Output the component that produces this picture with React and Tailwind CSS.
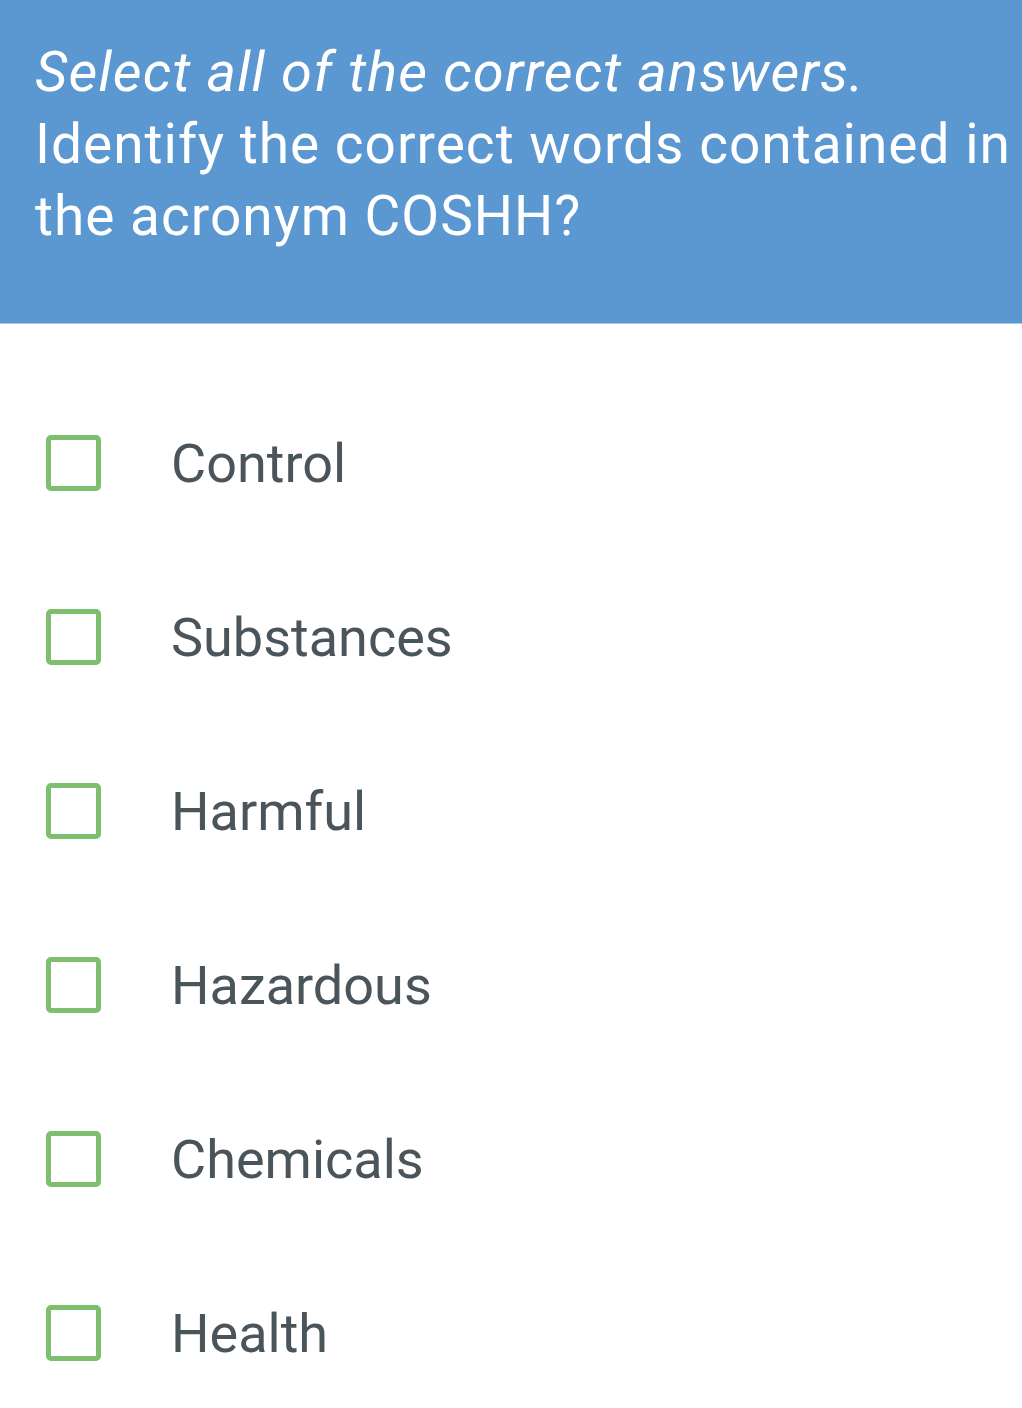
export default function App() {
  const options = ["Control", "Substances", "Harmful", "Hazardous", "Chemicals", "Health"];
  return (
    <div className="w-[1022px] h-[1408px] bg-white overflow-hidden" style={{ fontFamily: "Roboto, 'Noto Sans', sans-serif" }}>
      <div className="h-[324px] bg-[#5b97d0] border-b border-[#a9c9ea] pl-[35px] pt-[36px] text-white">
        <div className="italic text-[56px] leading-[72px] tracking-[1.2px]">Select all of the correct answers.</div>
        <div className="text-[55px] leading-[72px] tracking-[1px]">Identify the correct words contained in the acronym COSHH?</div>
      </div>
      <div className="flex flex-col pt-[52px]">
        {options.map((o) => (
          <div key={o} className="h-[174px] flex items-center pl-[46px]">
            <div className="w-[55px] h-[56px] border-[5px] border-[#7dbe6f] rounded-[5px] shrink-0" />
            <div className="ml-[70px] text-[54px] text-[#4a545b]">{o}</div>
          </div>
        ))}
      </div>
    </div>
  );
}
